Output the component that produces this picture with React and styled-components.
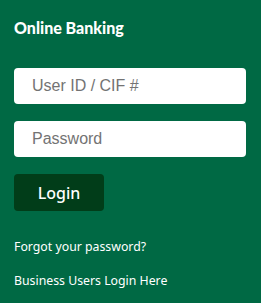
import styled, { createGlobalStyle } from 'styled-components'

const Global = createGlobalStyle`
  html, body {
    margin: 0;
    padding: 0;
    background: #006944;
  }
  * { box-sizing: border-box; }
`;

const Panel = styled.section`
  width: 261px;
  height: 303px;
  background: #006944;
  padding: 18px 15px 0 14px;
  font-family: "Noto Sans", "Liberation Sans", sans-serif;
  color: #fff;
`;

const Title = styled.h2`
  margin: 0 0 30px;
  font-family: Lato, "Noto Sans", sans-serif;
  font-size: 16px;
  font-weight: 900;
  line-height: 20px;
`;

const Form = styled.form`
  display: flex;
  flex-direction: column;
  gap: 17px;
`;

const Field = styled.input`
  width: 232px;
  height: 36px;
  border: none;
  border-radius: 4px;
  background: #fff;
  padding: 0 18px;
  font-family: "Liberation Sans", Arial, sans-serif;
  font-size: 16px;
  color: #333;
  outline: none;

  &::placeholder {
    color: #737373;
  }
`;

const Button = styled.button`
  width: 90px;
  height: 37px;
  border: none;
  border-radius: 4px;
  background: #013d19;
  color: #fff;
  font-family: "Noto Sans", sans-serif;
  font-size: 16px;
  font-weight: 500;
  cursor: pointer;
`;

const Links = styled.div`
  display: flex;
  flex-direction: column;
  gap: 16px;
  margin-top: 27px;
`;

const Link = styled.a`
  color: #fff;
  text-decoration: none;
  font-size: 12.3px;
  line-height: 18px;
`;

export default function App() {
  return (
    <>
      <Global />
      <Panel>
        <Title>Online Banking</Title>
        <Form onSubmit={e => e.preventDefault()}>
          <Field type="text" placeholder="User ID / CIF #" />
          <Field type="password" placeholder="Password" />
          <Button type="submit">Login</Button>
        </Form>
        <Links>
          <Link href="#">Forgot your password?</Link>
          <Link href="#">Business Users Login Here</Link>
        </Links>
      </Panel>
    </>
  )
}
